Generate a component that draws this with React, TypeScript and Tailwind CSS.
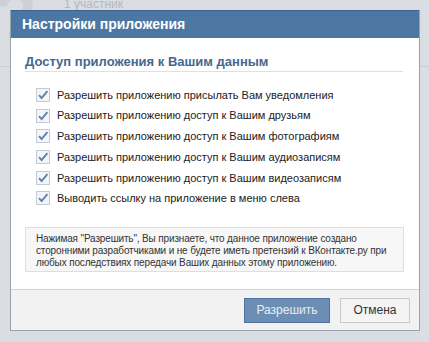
import React from "react";

const items = [
  "Разрешить приложению присылать Вам уведомления",
  "Разрешить приложению доступ к Вашим друзьям",
  "Разрешить приложению доступ к Вашим фотографиям",
  "Разрешить приложению доступ к Вашим аудиозаписям",
  "Разрешить приложению доступ к Вашим видеозаписям",
  "Выводить ссылку на приложение в меню слева",
];

function Check() {
  return (
    <svg width="14" height="14" viewBox="0 0 14 14" className="shrink-0">
      <rect x="0.5" y="0.5" width="13" height="13" fill="#f3f5f8" stroke="#c3ccd6" />
      <path d="M3 7.2 L5.6 10 L11.4 3.2" fill="none" stroke="#5f82a9" strokeWidth="1.9" />
    </svg>
  );
}

export default function App() {
  return (
    <div
      className="relative w-[429px] h-[342px] overflow-hidden bg-[#dadde2] pt-[10px] pl-[10px]"
      style={{ fontFamily: '"Liberation Sans", Arial, sans-serif' }}
    >
      <div className="absolute left-[-6px] top-[-18px] text-[70px] font-bold leading-none text-[#cdd1d7]">?</div>
      <div className="absolute left-[64px] top-[-5px] text-[12px] text-[#b3b8c0]">1 участник</div>
      <div className="absolute left-0 top-[66px] w-[10px] h-px bg-[#c9cdd3]" />
      <div className="absolute right-0 top-[66px] w-[10px] h-px bg-[#c9cdd3]" />

      <div className="relative w-[410px] h-[321px] border border-[#9aa3ad] bg-white flex flex-col">
        <div className="h-[28px] bg-[#4d77a3] border-t border-[#3b6390] flex items-center pl-[11px] -mt-px">
          <span className="text-white font-bold text-[14px]">Настройки приложения</span>
        </div>
        <div className="flex-1 px-[14px] pt-[16px]">
          <div className="text-[#45688e] font-bold text-[13px] leading-[16px] pb-[1px] border-b border-[#dae1e8] mr-[2px]">
            Доступ приложения к Вашим данным
          </div>
          <div className="mt-[16px] pl-[11px] flex flex-col gap-[6.7px]">
            {items.map((t) => (
              <div key={t} className="flex items-center gap-[7px] h-[14px]">
                <Check />
                <span className="text-[11px] text-[#222]">{t}</span>
              </div>
            ))}
          </div>
          <div className="mt-[22px] mr-[1px] h-[45px] border border-[#dedede] bg-[#f7f7f7] pl-[10px] pr-[4px] pt-[5px] text-[10px] leading-[12px] tracking-[-0.15px] text-[#333]">
            Нажимая "Разрешить", Вы признаете, что данное приложение создано сторонними разработчиками и не будете иметь претензий к ВКонтакте.ру при любых последствиях передачи Ваших данных этому приложению.
          </div>
        </div>
        <div className="h-[41px] border-t border-[#cfd2d6] bg-[#f2f2f2] flex items-center justify-end gap-[10px] pr-[9px]">
          <button className="w-[86px] h-[25px] bg-[#6c8eb4] border border-[#4f73a0] text-[#e8eef5] text-[12px]">
            Разрешить
          </button>
          <button className="w-[70px] h-[25px] bg-[#f4f4f4] border border-[#c9c9c9] text-[#333] text-[12px]">
            Отмена
          </button>
        </div>
      </div>
    </div>
  );
}
